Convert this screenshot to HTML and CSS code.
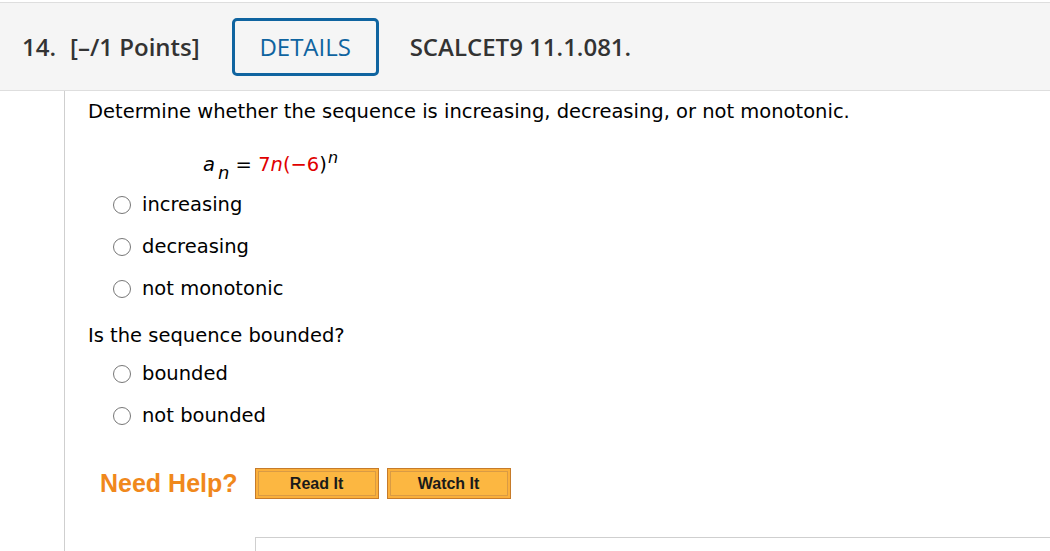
FILE: index.html
```html
<!DOCTYPE html>
<html lang="en">
<head>
    <meta charset="UTF-8">
    <title>Question 14</title>
    <meta name="viewport" content="width=device-width, initial-scale=1.0">
    <link rel="stylesheet" href="styles.css">
</head>
<body>
<div class="question">
    <div class="head">
        <span class="num">14.</span>
        <span class="points">[&ndash;/1 Points]</span>
        <button class="details">DETAILS</button>
        <span class="ref">SCALCET9 11.1.081.</span>
    </div>
    <div class="body">
        <p class="prompt">Determine whether the sequence is increasing, decreasing, or not monotonic.</p>
        <div class="eq">
            <i>a</i><sub><i>n</i></sub> = <span class="red">7<i>n</i>(&minus;6</span>)<sup><i>n</i></sup>
        </div>
        <div class="choices">
            <label class="choice"><span class="radio"></span>increasing</label>
            <label class="choice"><span class="radio"></span>decreasing</label>
            <label class="choice"><span class="radio"></span>not monotonic</label>
        </div>
        <p class="prompt second">Is the sequence bounded?</p>
        <div class="choices">
            <label class="choice"><span class="radio"></span>bounded</label>
            <label class="choice"><span class="radio"></span>not bounded</label>
        </div>
        <div class="help">
            <span class="need">Need Help?</span>
            <button class="orange">Read It</button>
            <button class="orange">Watch It</button>
        </div>
        <div class="answer"></div>
    </div>
</div>
</body>
</html>
```

FILE: styles.css
```css
body {
    margin: 0;
    padding-top: 2px;
    background: white;
    font-family: "DejaVu Sans", Verdana, sans-serif;
    color: #000;
}

.head {
    display: flex;
    align-items: center;
    height: 87px;
    padding-left: 22px;
    background: #f5f5f5;
    border-top: 1px solid #dedede;
    border-bottom: 1px solid #dedede;
    font-family: "Open Sans", sans-serif;
    font-size: 24px;
    font-weight: 600;
    color: #333;
}

.num {
    margin-right: 14px;
}

.details {
    margin-left: 32px;
    width: 147px;
    height: 58px;
    border: 3px solid #0f64a0;
    border-radius: 5px;
    background: transparent;
    font-family: "Open Sans", sans-serif;
    font-size: 24px;
    font-weight: 400;
    color: #0f64a0;
    padding: 0;
}

.ref {
    margin-left: 31px;
}

.body {
    margin-left: 64px;
    border-left: 1px solid #cfcfcf;
    padding-left: 23px;
    padding-top: 10px;
    min-height: 470px;
}

.prompt {
    margin: 0;
    font-size: 19.5px;
    line-height: 22px;
}

.second {
    margin-top: 25px;
}

.eq {
    margin: 31px 0 0 115px;
    font-size: 19.5px;
    line-height: 22px;
}

.eq sub {
    font-size: 18px;
    vertical-align: -8px;
    line-height: 0;
    margin-left: 3px;
    margin-right: 0;
}

.eq sup {
    font-size: 16px;
    vertical-align: 8px;
    line-height: 0;
    margin-left: 1px;
}

.red {
    color: #e00000;
}

.choices {
    display: flex;
    flex-direction: column;
    gap: 20px;
    padding-left: 25px;
    margin-top: 18px;
}

.second + .choices {
    margin-top: 16px;
}

.choice {
    display: flex;
    align-items: center;
    font-size: 19.5px;
    line-height: 22px;
}

.radio {
    width: 16px;
    height: 16px;
    border: 1.5px solid #777;
    border-radius: 50%;
    margin-right: 11px;
    background: white;
}

.help {
    display: flex;
    align-items: center;
    margin-top: 41px;
    padding-left: 12px;
}

.need {
    font-family: "Liberation Sans", Arial, sans-serif;
    font-weight: bold;
    font-size: 25px;
    color: #f0881c;
    margin-right: 17px;
}

.orange {
    width: 124px;
    height: 31px;
    margin-right: 8px;
    background: #fcb741;
    border: 1px solid #c67b2a;
    box-shadow: inset 0 0 0 2px #fbb03b, inset 0 0 0 3px #d99b45;
    font-family: "Liberation Sans", Arial, sans-serif;
    font-weight: bold;
    font-size: 16px;
    color: #1a1a1a;
    padding: 0;
}

.answer {
    margin: 38px 0 0 167px;
    height: 30px;
    border-top: 1px solid #cfcfcf;
    border-left: 1px solid #cfcfcf;
}
```
